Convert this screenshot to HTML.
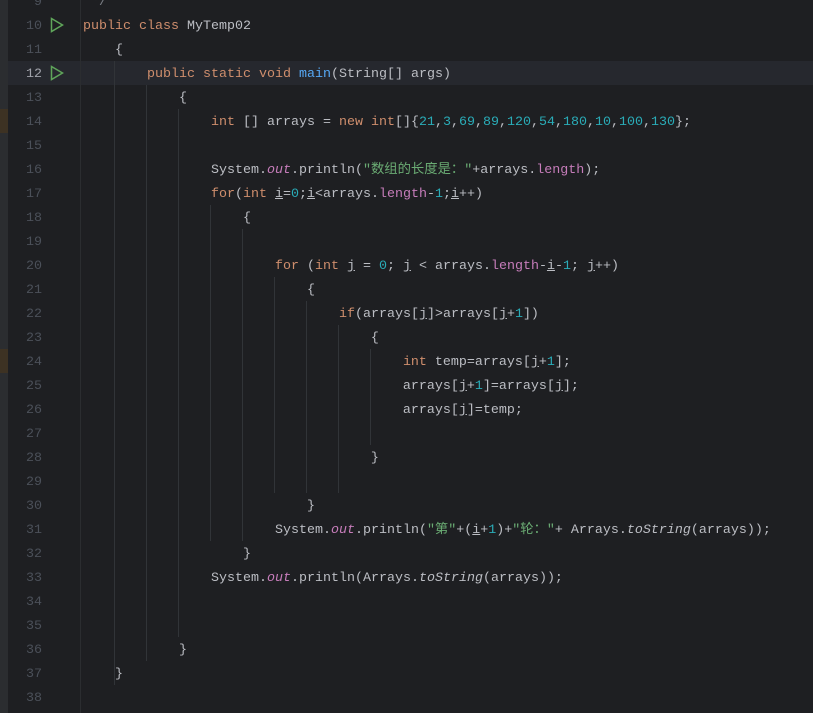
<!DOCTYPE html>
<html><head><meta charset="utf-8"><style>
body{margin:0;background:#1e1f22;width:813px;height:713px;overflow:hidden;position:relative;font-family:"Liberation Mono","Noto Sans CJK SC",monospace;font-size:13.33px;color:#bcbec4}
.strip{position:absolute;left:0;top:0;width:8px;height:713px;background:#2b2d30}
.mk{position:absolute;left:0;width:8px;height:24px;background:#3d3223}
.sep{position:absolute;left:80px;top:0;width:1px;height:713px;background:#2b2d30}
.hl{position:absolute;left:8px;top:61px;width:805px;height:24px;background:#26282e}
.ln{position:absolute;left:8px;width:34px;text-align:right;height:24px;line-height:24px;color:#4b5059;transform:translateY(2px)}
.c{position:absolute;left:83px;height:24px;line-height:24px;white-space:pre;transform:translateY(2px)}
.g{position:absolute;width:1px;background:#313438}
.k{color:#cf8e6d}.n{color:#2aacb8}.s{color:#6aab73}.f{color:#c77dbb}.fi{color:#c77dbb;font-style:italic}.m{color:#56a8f5}.it{font-style:italic}.u{text-decoration:underline}.cm{color:#7a7e85}
.run{position:absolute;left:50px}
</style></head><body>
<div class="strip"></div>
<div class="mk" style="top:109px"></div>
<div class="mk" style="top:349px"></div>
<div class="hl"></div>
<div class="sep"></div>
<div class="g" style="left:114px;top:61px;height:624px"></div>
<div class="g" style="left:146px;top:85px;height:576px"></div>
<div class="g" style="left:178px;top:109px;height:528px"></div>
<div class="g" style="left:210px;top:205px;height:336px"></div>
<div class="g" style="left:242px;top:229px;height:312px"></div>
<div class="g" style="left:274px;top:277px;height:216px"></div>
<div class="g" style="left:306px;top:301px;height:192px"></div>
<div class="g" style="left:338px;top:325px;height:168px"></div>
<div class="g" style="left:370px;top:349px;height:96px"></div>
<svg class="run" style="top:17px" width="14" height="16"><path d="M1.5 1.5 L12.5 8 L1.5 14.5 Z" fill="none" stroke="#5fa55a" stroke-width="1.5"/></svg>
<svg class="run" style="top:65px" width="14" height="16"><path d="M1.5 1.5 L12.5 8 L1.5 14.5 Z" fill="none" stroke="#5fa55a" stroke-width="1.5"/></svg>
<div class="ln" style="top:-11px">9</div>
<div class="ln" style="top:13px">10</div>
<div class="ln" style="top:37px">11</div>
<div class="ln" style="top:61px;color:#a1a3ab">12</div>
<div class="ln" style="top:85px">13</div>
<div class="ln" style="top:109px">14</div>
<div class="ln" style="top:133px">15</div>
<div class="ln" style="top:157px">16</div>
<div class="ln" style="top:181px">17</div>
<div class="ln" style="top:205px">18</div>
<div class="ln" style="top:229px">19</div>
<div class="ln" style="top:253px">20</div>
<div class="ln" style="top:277px">21</div>
<div class="ln" style="top:301px">22</div>
<div class="ln" style="top:325px">23</div>
<div class="ln" style="top:349px">24</div>
<div class="ln" style="top:373px">25</div>
<div class="ln" style="top:397px">26</div>
<div class="ln" style="top:421px">27</div>
<div class="ln" style="top:445px">28</div>
<div class="ln" style="top:469px">29</div>
<div class="ln" style="top:493px">30</div>
<div class="ln" style="top:517px">31</div>
<div class="ln" style="top:541px">32</div>
<div class="ln" style="top:565px">33</div>
<div class="ln" style="top:589px">34</div>
<div class="ln" style="top:613px">35</div>
<div class="ln" style="top:637px">36</div>
<div class="ln" style="top:661px">37</div>
<div class="ln" style="top:685px">38</div>
<div class="c cm" style="top:-11px"> */</div>
<div class="c" style="top:13px"><span class="k">public class</span> MyTemp02</div>
<div class="c" style="top:37px">    {</div>
<div class="c" style="top:61px">        <span class="k">public static void</span> <span class="m">main</span>(String[] args)</div>
<div class="c" style="top:85px">            {</div>
<div class="c" style="top:109px">                <span class="k">int</span> [] arrays = <span class="k">new int</span>[]{<span class="n">21</span>,<span class="n">3</span>,<span class="n">69</span>,<span class="n">89</span>,<span class="n">120</span>,<span class="n">54</span>,<span class="n">180</span>,<span class="n">10</span>,<span class="n">100</span>,<span class="n">130</span>};</div>
<div class="c" style="top:157px">                System.<span class="fi">out</span>.println(<span class="s">"数组的长度是："</span>+arrays.<span class="f">length</span>);</div>
<div class="c" style="top:181px">                <span class="k">for</span>(<span class="k">int</span> <span class="u">i</span>=<span class="n">0</span>;<span class="u">i</span>&lt;arrays.<span class="f">length</span>-<span class="n">1</span>;<span class="u">i</span>++)</div>
<div class="c" style="top:205px">                    {</div>
<div class="c" style="top:253px">                        <span class="k">for</span> (<span class="k">int</span> <span class="u">j</span> = <span class="n">0</span>; <span class="u">j</span> &lt; arrays.<span class="f">length</span>-<span class="u">i</span>-<span class="n">1</span>; <span class="u">j</span>++)</div>
<div class="c" style="top:277px">                            {</div>
<div class="c" style="top:301px">                                <span class="k">if</span>(arrays[<span class="u">j</span>]&gt;arrays[<span class="u">j</span>+<span class="n">1</span>])</div>
<div class="c" style="top:325px">                                    {</div>
<div class="c" style="top:349px">                                        <span class="k">int</span> temp=arrays[<span class="u">j</span>+<span class="n">1</span>];</div>
<div class="c" style="top:373px">                                        arrays[<span class="u">j</span>+<span class="n">1</span>]=arrays[<span class="u">j</span>];</div>
<div class="c" style="top:397px">                                        arrays[<span class="u">j</span>]=temp;</div>
<div class="c" style="top:445px">                                    }</div>
<div class="c" style="top:493px">                            }</div>
<div class="c" style="top:517px">                        System.<span class="fi">out</span>.println(<span class="s">"第"</span>+(<span class="u">i</span>+<span class="n">1</span>)+<span class="s">"轮："</span>+ Arrays.<span class="it">toString</span>(arrays));</div>
<div class="c" style="top:541px">                    }</div>
<div class="c" style="top:565px">                System.<span class="fi">out</span>.println(Arrays.<span class="it">toString</span>(arrays));</div>
<div class="c" style="top:637px">            }</div>
<div class="c" style="top:661px">    }</div>
</body></html>
